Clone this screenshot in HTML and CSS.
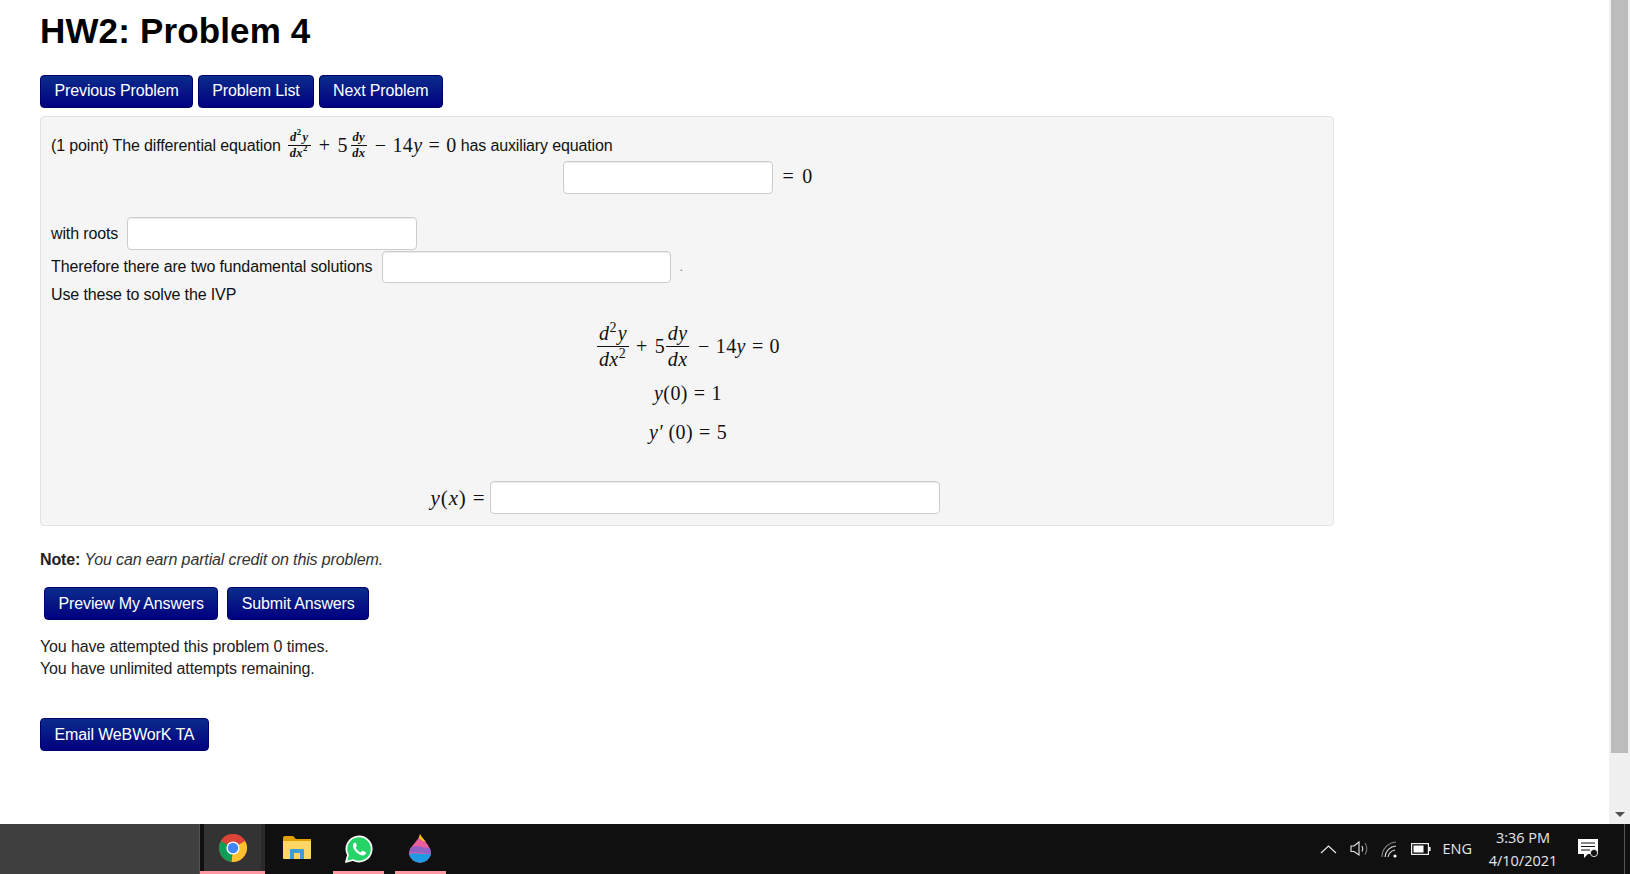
FILE: index.html
```html
<!DOCTYPE html>
<html lang="en">

<head>
    <meta charset="UTF-8">
    <title>HW2: Problem 4</title>
    <link rel="stylesheet" href="styles.css">
</head>

<body>
    <div class="window">
        <div class="content">
            <h1>HW2: Problem 4</h1>
            <div class="nav">
                <a class="btn">Previous Problem</a>
                <a class="btn">Problem List</a>
                <a class="btn">Next Problem</a>
            </div>

            <div class="well">
                <div class="line first">
                    <span>(1 point) The differential equation</span>
                    <span class="math small">
                        <span class="frac"><span>d<sup>2</sup>y</span><span>dx<sup>2</sup></span></span>
                        <i class="op">+</i><b class="num">5</b>
                        <span class="frac"><span>dy</span><span>dx</span></span>
                        <i class="op">−</i><b class="num">14</b><i>y</i><i class="op">=</i><b class="num">0</b>
                    </span>
                    <span>has auxiliary equation</span>
                </div>
                <div class="line center aux">
                    <input class="answer w-aux" type="text">
                    <span class="math eq-zero"><i class="op">=</i><b class="num">0</b></span>
                </div>
                <div class="line roots">
                    <span>with roots</span>
                    <input class="answer w-roots" type="text">
                </div>
                <div class="line fund">
                    <span>Therefore there are two fundamental solutions</span>
                    <input class="answer w-fund" type="text">
                    <span class="dot">.</span>
                </div>
                <div class="line use">Use these to solve the IVP</div>

                <div class="display">
                    <div class="math big">
                        <span class="frac"><span>d<sup>2</sup>y</span><span>dx<sup>2</sup></span></span>
                        <i class="op">+</i><b class="num">5</b>
                        <span class="frac"><span>dy</span><span>dx</span></span>
                        <i class="op">−</i><b class="num">14</b><i>y</i><i class="op">=</i><b class="num">0</b>
                    </div>
                    <div class="math ivp"><i>y</i><b class="num">(0)</b><i class="op">=</i><b class="num">1</b></div>
                    <div class="math ivp"><i>y′</i><b class="num">&nbsp;(0)</b><i class="op">=</i><b class="num">5</b></div>
                </div>

                <div class="line center final">
                    <span class="math"><i>y</i><b class="num">(</b><i>x</i><b class="num">)</b><i class="op eq-last">=</i></span>
                    <input class="answer w-final" type="text">
                </div>
            </div>

            <p class="note"><strong>Note:</strong> <em>You can earn partial credit on this problem.</em></p>

            <div class="submit-row">
                <a class="btn">Preview My Answers</a>
                <a class="btn">Submit Answers</a>
            </div>

            <p class="attempts">You have attempted this problem 0 times.<br>You have unlimited attempts remaining.</p>

            <a class="btn email">Email WeBWorK TA</a>
        </div>

        <div class="scrollbar">
            <div class="thumb"></div>
            <div class="arrow"></div>
        </div>
    </div>

    <div class="taskbar">
        <div class="search"></div>

        <div class="tile active">
            <svg width="30" height="30" viewBox="0 0 30 30">
                <circle cx="15" cy="15" r="14" fill="#db4437" />
                <path d="M15 15 L27.1 8 A14 14 0 0 1 13.5 28.9 Z" fill="#fbc02d" />
                <path d="M15 15 L13.5 28.9 A14 14 0 0 1 2.9 8 Z" fill="#0f9d58" />
                <path d="M2.9 8 A14 14 0 0 1 15 1 A14 14 0 0 1 27.1 8 L15 8 Z" fill="#db4437" />
                <circle cx="15" cy="15" r="6.6" fill="#fff" />
                <circle cx="15" cy="15" r="5.2" fill="#4285f4" />
            </svg>
            <div class="bar"></div>
        </div>

        <div class="tile folder">
            <svg width="28" height="24" viewBox="0 0 28 24">
                <path d="M0 2 Q0 0 2 0 H10 L13 3 H28 V6 H0 Z" fill="#e0a100" />
                <path d="M0 5 H28 V22 Q28 23 27 23 H1 Q0 23 0 22 Z" fill="#fdd663" />
                <path d="M7 23 V14 Q7 13 8 13 H20 Q21 13 21 14 V23 H17 V17 H11 V23 Z" fill="#3b9be0" />
            </svg>
        </div>

        <div class="tile whatsapp">
            <svg width="28" height="28" viewBox="0 0 28 28">
                <path d="M1 27 L3 20 A12.6 12.6 0 1 1 8 25 Z" fill="#25d366" stroke="#fff" stroke-width="1.8" stroke-linejoin="round" />
                <path d="M10 7.5 Q8 8 7.8 10.5 Q8 14 11.5 17.5 Q15 20.6 18 20.6 Q20.6 20.2 21 18 Q21 17.2 20.4 17 L17.8 15.8 Q17.2 15.6 16.8 16.2 L16 17.2 Q15.5 17.5 15 17.2 Q12 15.8 10.8 13 Q10.6 12.5 11 12.1 L11.8 11.1 Q12 10.6 11.8 10.2 L10.8 7.9 Q10.5 7.4 10 7.5 Z" fill="#fff" />
            </svg>
            <div class="bar"></div>
        </div>

        <div class="tile drop">
            <svg width="24" height="31" viewBox="0 0 24 31">
                <path d="M12 0 C13 4 23 11 23 20 A11.2 10.8 0 0 1 1 20 C1 12 11 7 12 0 Z" fill="#e85d9c" />
                <path d="M12 0 C13 3 16 5 18 8 C15 7 13 6 11 4 Z" fill="#f6c700" />
                <path d="M2.4 14 C8 10 15 14 22 14 Q23 17 23 20 C15 20 8 17 1.2 19 Q1.4 16 2.4 14 Z" fill="#8f62c8" />
                <path d="M1 20 C8 18 15 21 23 20 A11.2 10.8 0 0 1 1 20 Z" fill="#1f9be6" />
            </svg>
            <div class="bar"></div>
        </div>

        <div class="tray">
            <svg class="tray-icon chevron" width="17" height="10" viewBox="0 0 17 10">
                <path d="M1 9 L8.5 2 L16 9" fill="none" stroke="#e6e6e6" stroke-width="1.2" />
            </svg>
            <svg class="tray-icon speaker" width="21" height="18" viewBox="0 0 21 18">
                <path d="M1 6 H4 L9 2 V15 L4 11.5 H1 Z" fill="none" stroke="#e6e6e6" stroke-width="1.1" />
                <path d="M12 6 Q13.5 8.7 12 11.5" fill="none" stroke="#e6e6e6" stroke-width="1.1" />
                <path d="M15 3 Q18.6 8.7 15 14.5" fill="none" stroke="#777" stroke-width="1.1" />
            </svg>
            <svg class="tray-icon wifi" width="17" height="17" viewBox="0 0 17 17">
                <path d="M1 16 A15 15 0 0 1 15 1" fill="none" stroke="#888" stroke-width="1.1" />
                <path d="M4 16 A12 12 0 0 1 15 5" fill="none" stroke="#ddd" stroke-width="1.1" />
                <path d="M7 16 A9 9 0 0 1 14 9" fill="none" stroke="#ddd" stroke-width="1.1" />
                <circle cx="14" cy="15" r="1.6" fill="#fff" />
            </svg>
            <svg class="tray-icon" width="20" height="12" viewBox="0 0 20 12">
                <rect x="0.6" y="0.6" width="16.8" height="10.8" fill="none" stroke="#eee" stroke-width="1.2" />
                <rect x="2.5" y="2.5" width="10" height="7" fill="#fff" />
                <rect x="18" y="4" width="1.6" height="4" fill="#eee" />
            </svg>
            <span class="lang">ENG</span>
            <div class="clock">
                <span>3:36 PM</span>
                <span>4/10/2021</span>
            </div>
            <svg class="notify" width="22" height="20" viewBox="0 0 22 20">
                <path d="M0 0 H20 V15 H10 L6 19 V15 H0 Z" fill="#fff" />
                <path d="M3 4 H17 M3 7.5 H17 M3 11 H12" stroke="#111" stroke-width="1.1" />
                <circle cx="16" cy="14" r="3.6" fill="#111" stroke="#ddd" stroke-width="1" />
            </svg>
            <div class="show-desktop"></div>
        </div>
    </div>
</body>

</html>
```

FILE: styles.css
```css
* {
    box-sizing: border-box;
}

html,
body {
    height: 100%;
}

body {
    margin: 0;
    display: flex;
    flex-direction: column;
    height: 874px;
    overflow: hidden;
    background-color: #fff;
    color: #111;
    font-family: "Liberation Sans", Arial, sans-serif;
    font-size: 16px;
    line-height: 22px;
}

.window {
    display: flex;
    height: 824px;
}

.content {
    width: 1609px;
    padding-left: 40px;
    letter-spacing: -0.13px;
}

h1 {
    margin: 9px 0 0;
    font-size: 35px;
    line-height: 44px;
    letter-spacing: 0.15px;
    color: #000;
}

.nav {
    display: flex;
    gap: 4.5px;
    margin-top: 22px;
}

.btn {
    display: inline-block;
    height: 33px;
    padding: 0 13.5px;
    border: 1px solid #00006b;
    border-radius: 4px;
    background: linear-gradient(#0b2c8c, #00007f);
    color: #fff;
    font-size: 16px;
    line-height: 29px;
    white-space: nowrap;
}

.submit-row .btn,
.email {
    line-height: 31px;
}

.well {
    width: 1294px;
    height: 410px;
    margin-top: 8px;
    padding: 12px 10px 0;
    border: 1px solid #e3e3e3;
    border-radius: 4px;
    background-color: #f5f5f5;
}

.line {
    display: flex;
    align-items: center;
    height: 32px;
}

.first > span:first-child,
.first > span:last-child {
    padding-top: 2px;
}

.center {
    justify-content: center;
}

.aux {
    height: 33px;
    margin-bottom: 23px;
    padding-left: 2px;
}

.roots {
    height: 33px;
    gap: 9px;
}

.fund {
    margin-top: 1px;
    gap: 10px;
}

.use {
    height: 22px;
    margin-top: 1px;
}

.dot {
    margin-left: -2px;
    font-size: 12px;
    color: #777;
}

.answer {
    height: 33px;
    padding: 4px 6px;
    border: 1px solid #ccc;
    border-radius: 4px;
    background-color: #fff;
    box-shadow: inset 0 1px 1px rgba(0, 0, 0, 0.075);
}

.fund .answer {
    height: 32px;
}

.w-aux {
    width: 210px;
}

.w-roots {
    width: 290px;
}

.w-fund {
    width: 289px;
}

.w-final {
    width: 450px;
}

.math {
    font-family: "Liberation Serif", "Times New Roman", serif;
    color: #111;
    letter-spacing: 0.4px;
    white-space: nowrap;
}

.math i,
.math b {
    font-weight: normal;
}

.math b.num {
    font-style: normal;
}

.math .op {
    font-style: normal;
}

.small {
    display: inline-flex;
    align-items: center;
    margin: 0 4px 0 7px;
    font-size: 20px;
}

.small .frac {
    font-size: 12.5px;
    line-height: 15px;
    font-weight: bold;
}

.small .frac:first-child {
    width: 23px;
}

.small .frac:nth-of-type(2) {
    width: 16px;
    margin: 0 2px 0 3px;
}

.small .op {
    margin: 0 6px;
}

.small .op:first-of-type {
    margin: 0 7px 0 8px;
}

.frac {
    display: inline-flex;
    flex-direction: column;
    align-items: center;
    font-style: italic;
    text-align: center;
}

.frac span:first-child {
    width: 100%;
    border-bottom: 1px solid #111;
}

.frac sup {
    margin-right: 1px;
    font-size: 0.7em;
    font-style: normal;
    line-height: 0;
}

.eq-zero {
    display: inline-flex;
    gap: 8px;
    margin: 0 0 4px 9px;
    font-size: 20px;
}

.display {
    margin-top: 16px;
    text-align: center;
}

.big {
    display: flex;
    justify-content: center;
    align-items: center;
    height: 45px;
    padding: 3px 0 0 3px;
    font-size: 20px;
}

.big .frac {
    font-size: 20px;
    line-height: 25px;
}

.big .frac:first-child {
    width: 32px;
}

.big .frac:nth-of-type(2) {
    width: 23px;
    margin: 0 3px 0 1px;
}

.big .op {
    margin: 0 6px;
}

.big .op:first-of-type {
    margin: 0 7px;
}

.ivp {
    display: flex;
    justify-content: center;
    height: 26px;
    margin-top: 13px;
    padding-left: 2px;
    font-size: 20px;
    line-height: 26px;
}

.ivp .op {
    margin: 0 6px;
}

.final {
    height: 33px;
    margin-top: 36px;
    padding-right: 4px;
}

.final .math {
    font-size: 21px;
    letter-spacing: 0.9px;
}

.eq-last {
    margin: 0 4px 0 6px;
}

.note {
    margin: 23px 0 0;
    color: #222;
}

.note em {
    color: #333;
}

.submit-row {
    display: flex;
    gap: 9px;
    margin: 16px 0 0 4px;
}

.attempts {
    margin: 16px 0 0;
    color: #222;
}

.email {
    margin-top: 38px;
}

.scrollbar {
    display: flex;
    flex-direction: column;
    align-items: center;
    width: 21px;
    background-color: #f0f0f0;
}

.thumb {
    width: 17px;
    height: 753px;
    background-color: #bcbcbc;
}

.arrow {
    width: 0;
    height: 0;
    margin-top: 59px;
    border-top: 5px solid #505050;
    border-left: 5px solid transparent;
    border-right: 5px solid transparent;
}

.taskbar {
    display: flex;
    height: 50px;
    background-color: #101010;
    color: #e6e6e6;
}

.search {
    width: 200px;
    margin-right: 4px;
    border-right: 1px solid #555;
    background-color: #3f3f3f;
}

.tile {
    display: flex;
    flex-direction: column;
    align-items: center;
    justify-content: flex-end;
    width: 61px;
}

.tile svg {
    margin-bottom: 8px;
}

.active {
    background-color: #333;
    border-right: 4px solid #2a2a2a;
}

.active svg {
    margin: 0 0 8px 0;
}

.folder {
    width: 63px;
}

.folder svg {
    margin-bottom: 14px;
}

.whatsapp {
    width: 61px;
}

.whatsapp .bar,
.drop .bar {
    width: 51px;
}

.drop {
    width: 62px;
}

.drop svg {
    margin-bottom: 6px;
}

.bar {
    width: 100%;
    height: 3px;
    background-color: #ff9aa2;
}

.active .bar {
    width: 65px;
}

.tray {
    display: flex;
    align-items: center;
    margin-left: auto;
}

.tray-icon {
    margin-right: 9px;
}

.chevron {
    margin-right: 13px;
}

.speaker {
    margin-right: 10px;
}

.wifi {
    margin-right: 13px;
}

.lang {
    margin: 0 13px 0 2px;
    font-family: "Open Sans", "Liberation Sans", sans-serif;
    font-size: 14.5px;
}

.clock {
    display: flex;
    flex-direction: column;
    align-items: center;
    width: 76px;
    font-family: "Open Sans", "Liberation Sans", sans-serif;
    font-size: 14.5px;
    line-height: 23px;
}

.notify {
    margin: 0 24px 0 17px;
}

.show-desktop {
    width: 6px;
    height: 100%;
    border-left: 1px solid #555;
}
```
